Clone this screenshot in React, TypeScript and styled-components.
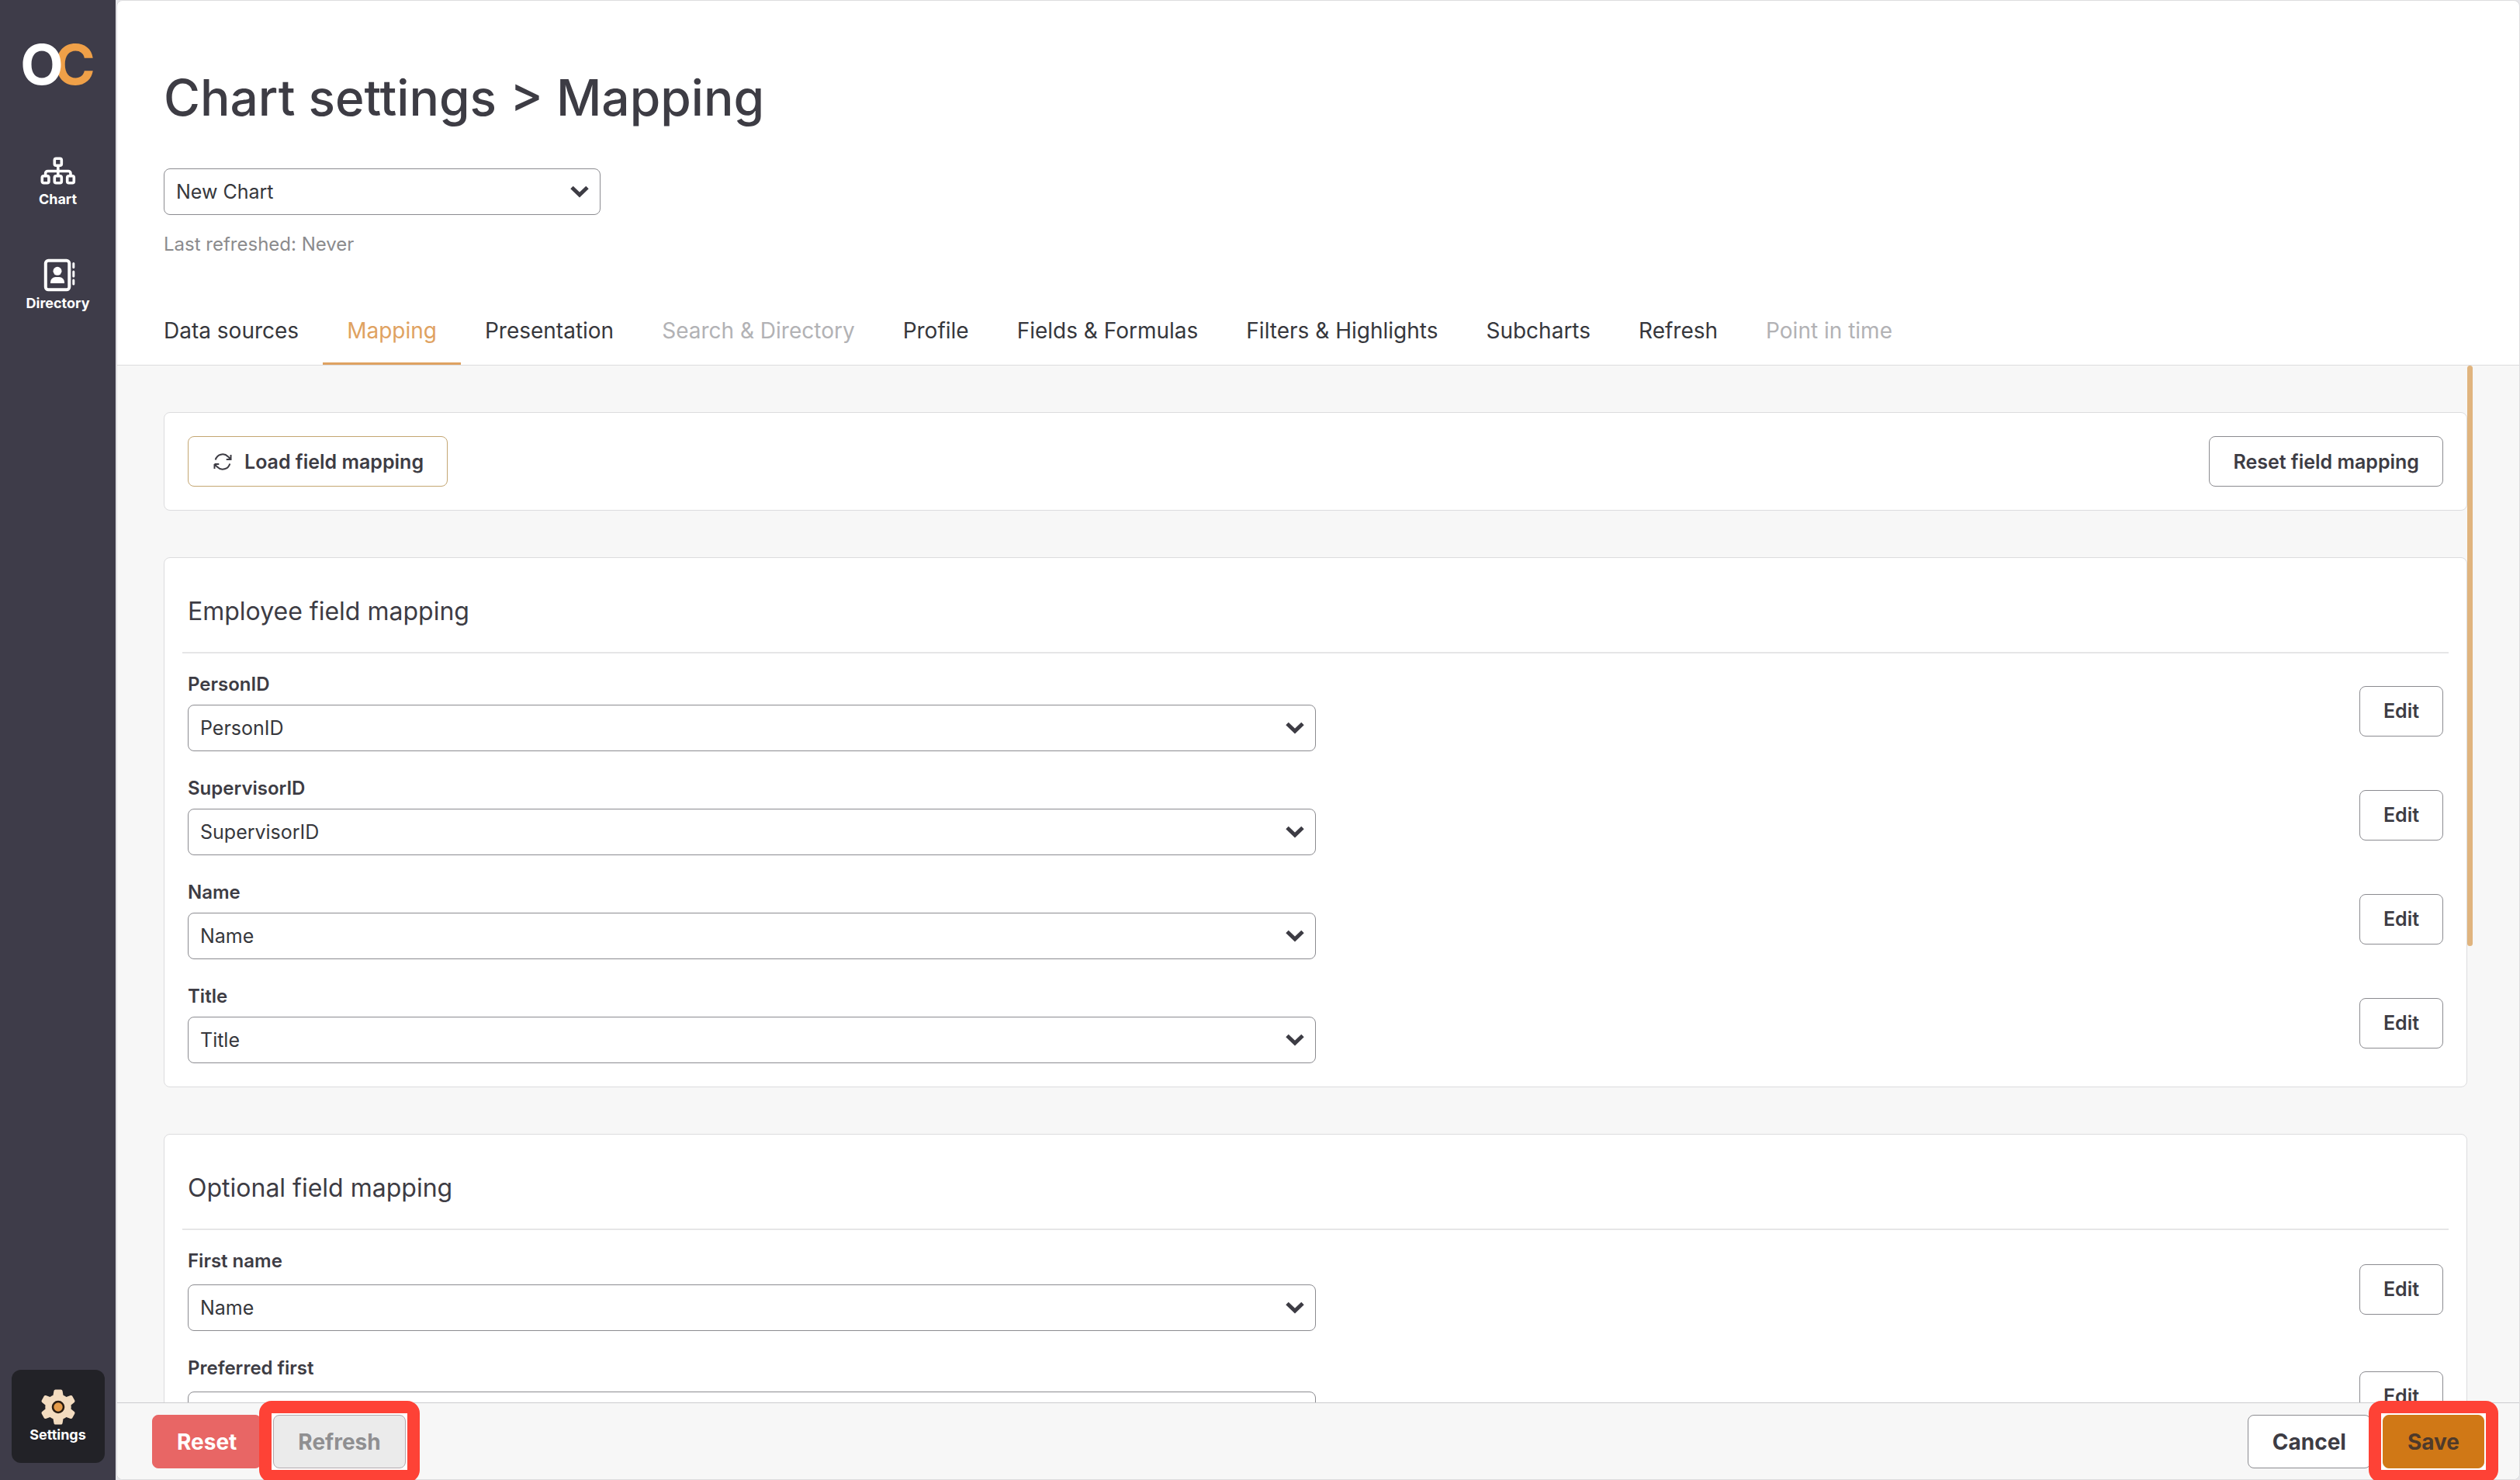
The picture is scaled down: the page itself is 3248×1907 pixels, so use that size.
import React, { useId } from "react";
import styled, { createGlobalStyle, css } from "styled-components";

const color = {
  ink: "#3d3c44",
  text: "#36373c",
  muted: "#8b8b8d",
  disabled: "#b2b2b5",
  accent: "#dfa261",
  thumb: "#e0b47e",
  sidebar: "#3e3c49",
  sidebarActive: "#222227",
  surface: "#ffffff",
  canvas: "#f7f7f7",
  line: "#dcdcde",
  control: "#8b8b90",
  danger: "#e86665",
  highlight: "#fe4236",
  save: "#d07816",
};

const GlobalStyle = createGlobalStyle`
  *, *::before, *::after { box-sizing: border-box; }
  body {
    margin: 0;
    background: #e6e6ea;
    color: ${color.text};
    font-family: Inter, "Liberation Sans", sans-serif;
    font-size: 25px;
    line-height: 36px;
  }
  button, select { font: inherit; color: inherit; margin: 0; }
`;

const Shell = styled.div`
  display: flex;
  height: 100vh;
  overflow: hidden;
`;

const Sidebar = styled.aside`
  display: flex;
  flex: none;
  flex-direction: column;
  align-items: center;
  width: 149px;
  padding: 47px 0 22px;
  background: ${color.sidebar};
`;

const Logo = styled.a`
  display: flex;
  margin-bottom: 54px;
  color: #fff;
  font-size: 72px;
  font-weight: 700;
  line-height: 72px;
  text-decoration: none;
`;

const LogoLetter = styled.span<{ $accent?: boolean }>`
  position: relative;
  z-index: ${(p) => (p.$accent ? 0 : 1)};
  margin-left: ${(p) => (p.$accent ? "-12px" : "0")};
  color: ${(p) => (p.$accent ? "#efa048" : "#fff")};
`;

const SideNav = styled.nav`
  display: flex;
  flex: 1;
  flex-direction: column;
  gap: 14px;
`;

const SideLink = styled.a<{ $active?: boolean; $last?: boolean }>`
  display: flex;
  flex-direction: column;
  align-items: center;
  width: 120px;
  height: 120px;
  padding-top: 24px;
  margin-top: ${(p) => (p.$last ? "auto" : "0")};
  border-radius: 12px;
  background: ${(p) => (p.$active ? color.sidebarActive : "transparent")};
  color: #fff;
  font-size: 18px;
  font-weight: 700;
  line-height: 24px;
  text-decoration: none;

  svg { display: block; flex: none; }
`;

const Main = styled.main`
  display: flex;
  flex: 1;
  flex-direction: column;
  min-width: 0;
  margin-left: 1px;
  border: 1px solid ${color.line};
  border-radius: 8px;
  background: ${color.surface};
`;

const Header = styled.header`
  flex: none;
  padding: 85px 60px 0;
  border-bottom: 1px solid ${color.line};
`;

const Title = styled.h1`
  margin: 0 0 51px;
  color: ${color.ink};
  font-size: 64px;
  font-weight: 500;
  line-height: 80px;
`;

const Refreshed = styled.p`
  margin: 20px 0 45px;
  color: ${color.muted};
  font-size: 24px;
`;

const Tabs = styled.nav`
  display: flex;
  margin: 0 -31px;
`;

const Tab = styled.button<{ $active?: boolean }>`
  padding: 30px 31px 23px;
  border: 0;
  border-bottom: 3px solid ${(p) => (p.$active ? color.accent : "transparent")};
  background: none;
  color: ${(p) => (p.$active ? color.accent : color.text)};
  font-size: 28px;
  white-space: nowrap;

  &:disabled { color: ${color.disabled}; }
`;

const SelectBox = styled.div<{ $width: string }>`
  position: relative;
  width: ${(p) => p.$width};

  svg {
    position: absolute;
    top: 50%;
    right: 15px;
    transform: translateY(-50%);
    pointer-events: none;
  }
`;

const NativeSelect = styled.select`
  display: block;
  appearance: none;
  width: 100%;
  height: 60px;
  padding: 0 56px 0 15px;
  border: 1px solid ${color.control};
  border-radius: 8px;
  background: ${color.surface};
  color: ${color.text};
`;

const Body = styled.div`
  display: flex;
  flex: 1;
  min-height: 0;
  padding: 0 60px;
  background: ${color.canvas};
`;

const ScrollArea = styled.div`
  display: flex;
  flex: 1;
  flex-direction: column;
  gap: 60px;
  min-width: 0;
  padding: 60px 0;
  overflow-y: auto;
  scrollbar-width: none;
`;

const ScrollTrack = styled.div`
  flex: none;
  width: 7px;
`;

const ScrollThumb = styled.div`
  height: 56%;
  border-radius: 4px;
  background: ${color.thumb};
`;

const Card = styled.section`
  flex: none;
  padding: 30px;
  border: 1px solid ${color.line};
  border-radius: 8px;
  background: ${color.surface};
`;

const Toolbar = styled(Card)`
  display: flex;
  justify-content: space-between;
`;

const Button = styled.button<{ $accent?: boolean }>`
  display: flex;
  flex: none;
  align-items: center;
  gap: 14px;
  height: 65px;
  padding: 0 30px;
  border: 1px solid ${(p) => (p.$accent ? "#c4a672" : color.control)};
  border-radius: 8px;
  background: ${color.surface};
  color: ${color.ink};
  font-weight: 600;
`;

const CardTitle = styled.h2`
  margin: 0 -7px 22px;
  padding: 17px 7px 30px;
  border-bottom: 2px solid #e6e6e7;
  color: ${color.ink};
  font-size: 32px;
  font-weight: 400;
  line-height: 44px;
`;

const FieldList = styled.div`
  display: flex;
  flex-direction: column;
  gap: 30px;
`;

const FieldRow = styled.div`
  display: flex;
  align-items: center;
  justify-content: space-between;
`;

const Field = styled.div<{ $gap: number }>`
  display: flex;
  flex-direction: column;
  gap: ${(p) => p.$gap}px;
  width: 50%;
`;

const FieldLabel = styled.label`
  color: ${color.ink};
  font-size: 24px;
  font-weight: 600;
`;

const Footer = styled.footer`
  position: relative;
  display: flex;
  flex: none;
  justify-content: space-between;
  padding: 15px 45px 14px;
  border-top: 1px solid #cbcbce;
  border-radius: 0 0 8px 8px;
  background: ${color.canvas};
`;

const FooterGroup = styled.div`
  display: flex;
  gap: 15px;
`;

const tones = {
  plain: css`border-color: ${color.control}; background: #fff; color: ${color.ink};`,
  danger: css`border-color: ${color.danger}; background: ${color.danger}; color: #fff;`,
  primary: css`border-color: ${color.save}; background: ${color.save}; color: #4f3a2a;`,
};

const FooterButton = styled.button<{ $tone: keyof typeof tones }>`
  height: 69px;
  padding: 0 31px;
  border: 1px solid;
  border-radius: 8px;
  font-size: 28px;
  font-weight: 700;
  ${(p) => tones[p.$tone]}

  &:disabled { border-color: #b3a9ae; background: #ebebeb; color: #8f8f91; }
`;

const Highlight = styled.div`
  position: relative;
  z-index: 1;

  &::before {
    content: "";
    position: absolute;
    inset: -18px;
    z-index: -1;
    border: 16px solid ${color.highlight};
    border-radius: 16px;
    background: #fff;
  }
`;

const Chevron = () => (
  <svg width="24" height="16" viewBox="0 0 24 16" fill="none" stroke={color.ink} strokeWidth="5" aria-hidden="true">
    <path d="M2 2.5 12 12 22 2.5" />
  </svg>
);

const ChartIcon = () => (
  <svg width="48" height="48" viewBox="0 0 48 48" fill="none" stroke="#fff" strokeWidth="3.6" strokeLinejoin="round" strokeLinecap="round" aria-hidden="true">
    <rect x="19.3" y="7.3" width="9" height="9" rx="2" />
    <rect x="3.3" y="29.8" width="8.6" height="9" rx="2" />
    <rect x="19.3" y="29.8" width="9" height="9" rx="2" />
    <rect x="35.7" y="29.8" width="8.6" height="9" rx="2" />
    <path d="M23.8 16.5v13M7.6 29.5v-3a3 3 0 0 1 3-3H37a3 3 0 0 1 3 3v3" />
  </svg>
);

const DirectoryIcon = () => (
  <svg width="48" height="48" viewBox="0 0 48 48" fill="none" aria-hidden="true">
    <rect x="7.8" y="4.8" width="30.5" height="37.5" rx="3.5" stroke="#fff" strokeWidth="4" />
    <circle cx="23" cy="18.3" r="5.5" fill="#fff" />
    <path d="M14 34v-1.5a6.5 6.5 0 0 1 6.5-6.5h5a6.5 6.5 0 0 1 6.5 6.5V34z" fill="#fff" />
    <path d="M43.8 8.5v5M43.8 19v6M43.8 30v5" stroke="#fff" strokeWidth="3" strokeLinecap="round" />
  </svg>
);

const GearIcon = () => (
  <svg width="48" height="48" viewBox="0 0 48 48" aria-hidden="true">
    <path
      d="M20.5 1.5h7a2 2 0 0 1 2 1.6l1 5.6q2.2.9 4 2.4l5.4-2a2 2 0 0 1 2.4.9l3 5.6a2 2 0 0 1-.5 2.4l-4.3 3.6q.4 2.4 0 4.8l4.3 3.6a2 2 0 0 1 .5 2.4l-3 5.6a2 2 0 0 1-2.4.9l-5.4-2q-1.8 1.5-4 2.4l-1 5.6a2 2 0 0 1-2 1.6h-7a2 2 0 0 1-2-1.6l-1-5.6q-2.2-.9-4-2.4l-5.4 2a2 2 0 0 1-2.4-.9l-3-5.6a2 2 0 0 1 .5-2.4l4.3-3.6q-.4-2.4 0-4.8l-4.3-3.6a2 2 0 0 1-.5-2.4l3-5.6a2 2 0 0 1 2.4-.9l5.4 2q1.8-1.5 4-2.4l1-5.6a2 2 0 0 1 2-1.6z"
      fill="#f3dcc0"
    />
    <circle cx="24" cy="24" r="7" fill="#e59c4b" stroke="#2b1d12" strokeWidth="2.6" />
  </svg>
);

const SyncIcon = () => (
  <svg width="28" height="28" viewBox="0 0 24 24" fill="none" stroke={color.ink} strokeWidth="1.7" aria-hidden="true">
    <path d="M16.023 9.348h4.992v-.001M2.985 19.644v-4.992m0 0h4.992m-4.993 0 3.181 3.183a8.25 8.25 0 0 0 13.803-3.7M4.031 9.865a8.25 8.25 0 0 1 13.803-3.7l3.181 3.182m0-4.991v4.99" />
  </svg>
);

type DropdownProps = { id?: string; value: string; width?: string; label?: string };

const Dropdown = ({ id, value, width = "100%", label }: DropdownProps) => (
  <SelectBox $width={width}>
    <NativeSelect id={id} aria-label={label} defaultValue={value}>
      <option value={value}>{value}</option>
    </NativeSelect>
    <Chevron />
  </SelectBox>
);

const MappingRow = ({ name, value, gap }: { name: string; value: string; gap: number }) => {
  const id = useId();
  return (
    <FieldRow>
      <Field $gap={gap}>
        <FieldLabel htmlFor={id}>{name}</FieldLabel>
        <Dropdown id={id} value={value} />
      </Field>
      <Button type="button">Edit</Button>
    </FieldRow>
  );
};

type MappingCardProps = { title: string; fields: [string, string][]; gap: number };

const MappingCard = ({ title, fields, gap }: MappingCardProps) => (
  <Card>
    <CardTitle>{title}</CardTitle>
    <FieldList>
      {fields.map(([name, value]) => (
        <MappingRow key={name} name={name} value={value} gap={gap} />
      ))}
    </FieldList>
  </Card>
);

const tabs = [
  { name: "Data sources" },
  { name: "Mapping", active: true },
  { name: "Presentation" },
  { name: "Search & Directory", disabled: true },
  { name: "Profile" },
  { name: "Fields & Formulas" },
  { name: "Filters & Highlights" },
  { name: "Subcharts" },
  { name: "Refresh" },
  { name: "Point in time", disabled: true },
];

const employeeFields: [string, string][] = [
  ["PersonID", "PersonID"],
  ["SupervisorID", "SupervisorID"],
  ["Name", "Name"],
  ["Title", "Title"],
];

const optionalFields: [string, string][] = [
  ["First name", "Name"],
  ["Preferred first", ""],
];

export default function App() {
  return (
    <>
      <GlobalStyle />
      <Shell>
        <Sidebar>
          <Logo href="#">
            <LogoLetter>O</LogoLetter>
            <LogoLetter $accent>C</LogoLetter>
          </Logo>
          <SideNav>
            <SideLink href="#chart"><ChartIcon />Chart</SideLink>
            <SideLink href="#directory"><DirectoryIcon />Directory</SideLink>
            <SideLink href="#settings" $active $last><GearIcon />Settings</SideLink>
          </SideNav>
        </Sidebar>
        <Main>
          <Header>
            <Title>Chart settings &gt; Mapping</Title>
            <Dropdown value="New Chart" width="563px" label="Chart" />
            <Refreshed>Last refreshed: Never</Refreshed>
            <Tabs>
              {tabs.map((tab) => (
                <Tab key={tab.name} type="button" $active={tab.active} disabled={tab.disabled}>
                  {tab.name}
                </Tab>
              ))}
            </Tabs>
          </Header>
          <Body>
            <ScrollArea>
              <Toolbar>
                <Button type="button" $accent><SyncIcon />Load field mapping</Button>
                <Button type="button">Reset field mapping</Button>
              </Toolbar>
              <MappingCard title="Employee field mapping" fields={employeeFields} gap={8} />
              <MappingCard title="Optional field mapping" fields={optionalFields} gap={12} />
            </ScrollArea>
            <ScrollTrack><ScrollThumb /></ScrollTrack>
          </Body>
          <Footer>
            <FooterGroup>
              <FooterButton type="button" $tone="danger">Reset</FooterButton>
              <Highlight>
                <FooterButton type="button" $tone="plain" disabled>Refresh</FooterButton>
              </Highlight>
            </FooterGroup>
            <FooterGroup>
              <FooterButton type="button" $tone="plain">Cancel</FooterButton>
              <Highlight>
                <FooterButton type="button" $tone="primary">Save</FooterButton>
              </Highlight>
            </FooterGroup>
          </Footer>
        </Main>
      </Shell>
    </>
  );
}
